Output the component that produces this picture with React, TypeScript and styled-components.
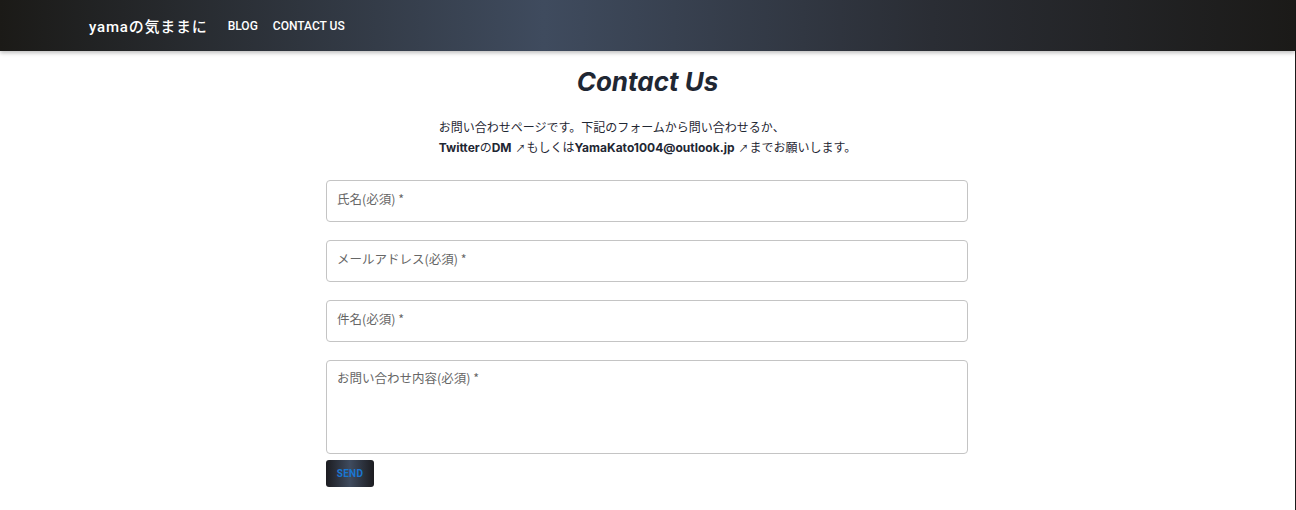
import styled, { createGlobalStyle } from "styled-components";

const GlobalStyle = createGlobalStyle`
  html, body {
    margin: 0;
    padding: 0;
    background: #fff;
  }
  body {
    font-family: "Noto Sans CJK JP", "Noto Sans", sans-serif;
  }
  * {
    box-sizing: border-box;
  }
`;

const Page = styled.div`
  min-height: 100vh;
  border-right: 1px solid #1b1b1b;
`;

const Header = styled.header`
  height: 51px;
  display: flex;
  align-items: center;
  padding: 0 89px;
  background: linear-gradient(90deg, #1b1a17 0%, #3f4b5e 42%, #2a2d34 72%, #1b1a18 100%);
  box-shadow: 0 2px 4px rgba(0, 0, 0, 0.25);
  position: relative;
  z-index: 2;
`;

const Brand = styled.div`
  font-family: Roboto, "Noto Sans CJK JP", sans-serif;
  font-size: 15px;
  font-weight: 500;
  letter-spacing: 0.8px;
  color: #fff;
  margin-right: 20px;
`;

const Nav = styled.nav`
  display: flex;
  gap: 15px;
`;

const NavLink = styled.a`
  font-family: Roboto, "Liberation Sans", sans-serif;
  font-size: 12px;
  font-weight: 500;
  color: #fff;
  text-decoration: none;
  text-transform: uppercase;
`;

const Main = styled.main`
  display: flex;
  flex-direction: column;
  align-items: center;
  padding-top: 14px;
`;

const Title = styled.h1`
  margin: 0;
  font-family: Inter, "Noto Sans", sans-serif;
  font-size: 26px;
  font-weight: 700;
  font-style: italic;
  color: #1f2733;
  line-height: 34px;
`;

const Intro = styled.div`
  margin-top: 18px;
  font-size: 12px;
  line-height: 20px;
  color: #1f2733;
`;

const Strong = styled.b`
  font-family: Inter, "Noto Sans CJK JP", sans-serif;
  font-weight: 700;
`;

const Arrow = styled.span`
  font-size: 10px;
  margin: 0 1px 0 4px;
`;

const Form = styled.form`
  width: 642px;
  margin: 22px 1px 0 0;
  display: flex;
  flex-direction: column;
  gap: 18px;
`;

const Field = styled.input`
  height: 42px;
  width: 100%;
  padding: 0 10px 5px;
  border: 1px solid #c4c4c4;
  border-radius: 4px;
  font-family: "Noto Sans CJK JP", Roboto, sans-serif;
  font-size: 12.5px;
  color: #333;
  outline: none;

  &::placeholder {
    color: #666;
  }
`;

const Area = styled.textarea`
  height: 94px;
  width: 100%;
  padding: 7px 10px;
  border: 1px solid #c4c4c4;
  border-radius: 4px;
  font-family: "Noto Sans CJK JP", Roboto, sans-serif;
  font-size: 12.5px;
  resize: none;
  outline: none;

  &::placeholder {
    color: #666;
  }
`;

const Send = styled.button`
  margin-top: -12px;
  width: 48px;
  height: 27px;
  border: none;
  border-radius: 3px;
  background: linear-gradient(90deg, #1c1c20 0%, #3f4b5e 50%, #1c1c20 100%);
  color: #1976d2;
  font-family: Roboto, "Liberation Sans", sans-serif;
  font-size: 10px;
  font-weight: 700;
  letter-spacing: 0.3px;
  cursor: pointer;
`;

export default function App() {
  return (
    <Page>
      <GlobalStyle />
      <Header>
        <Brand>yamaの気ままに</Brand>
        <Nav>
          <NavLink href="#">Blog</NavLink>
          <NavLink href="#">Contact Us</NavLink>
        </Nav>
      </Header>
      <Main>
        <Title>Contact Us</Title>
        <Intro>
          お問い合わせページです。下記のフォームから問い合わせるか、
          <br />
          <Strong>Twitter</Strong>の<Strong>DM</Strong>
          <Arrow>↗</Arrow>もしくは<Strong>YamaKato1004@outlook.jp</Strong>
          <Arrow>↗</Arrow>までお願いします。
        </Intro>
        <Form onSubmit={(e) => e.preventDefault()}>
          <Field placeholder="氏名(必須) *" />
          <Field placeholder="メールアドレス(必須) *" />
          <Field placeholder="件名(必須) *" />
          <Area placeholder="お問い合わせ内容(必須) *" />
          <Send type="submit">SEND</Send>
        </Form>
      </Main>
    </Page>
  );
}
